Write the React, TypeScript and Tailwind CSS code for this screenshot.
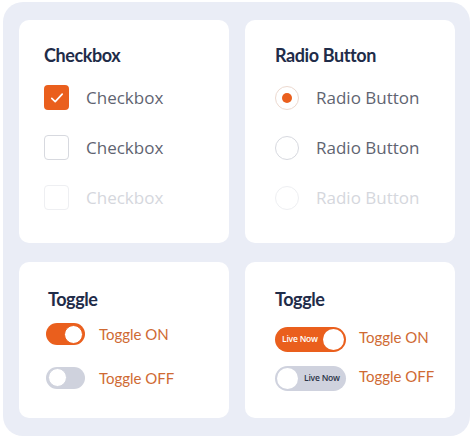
import React from "react";

const title = "text-[18px] leading-[24px] font-bold text-[#1f2c49] tracking-[-0.4px]";
const titleFont = { fontFamily: "Lato, 'Noto Sans', sans-serif" };
const bodyFont = { fontFamily: "'Open Sans', 'Noto Sans', sans-serif" };

function CheckRow({ state, label }: { state: "on" | "off" | "disabled"; label: string }) {
  return (
    <div className="flex h-[25px] items-center">
      {state === "on" ? (
        <span className="flex h-[25px] w-[25px] items-center justify-center rounded-[4px] bg-[#ea5f1d]">
          <svg width="16" height="16" viewBox="0 0 16 16" fill="none">
            <path d="M2.8 8.4l3.4 3.2 7-7.4" stroke="#fff" strokeWidth="1.7" strokeLinecap="round" strokeLinejoin="round" />
          </svg>
        </span>
      ) : (
        <span
          className={
            "h-[25px] w-[25px] rounded-[4px] border-[1.5px] bg-white " +
            (state === "off" ? "border-[#d7d9df]" : "border-[#eeeff2]")
          }
        />
      )}
      <span
        className={
          "ml-[17px] text-[17px] " + (state === "disabled" ? "text-[#d5d7dd]" : "text-[#5f6471]")
        }
        style={bodyFont}
      >
        {label}
      </span>
    </div>
  );
}

function RadioRow({ state, label }: { state: "on" | "off" | "disabled"; label: string }) {
  return (
    <div className="flex h-[25px] items-center">
      <span
        className={
          "flex h-[24px] w-[24px] items-center justify-center rounded-full border-[1.5px] bg-white " +
          (state === "on"
            ? "border-[#ecd9cf]"
            : state === "off"
            ? "border-[#d7d9df]"
            : "border-[#eeeff2]")
        }
      >
        {state === "on" && <span className="h-[10px] w-[10px] rounded-full bg-[#ea5f1d]" />}
      </span>
      <span
        className={
          "ml-[17px] text-[17px] " + (state === "disabled" ? "text-[#d5d7dd]" : "text-[#5f6471]")
        }
        style={bodyFont}
      >
        {label}
      </span>
    </div>
  );
}

function SmallToggle({ on, label }: { on: boolean; label: string }) {
  return (
    <div className="flex items-center">
      <span
        className={
          "flex h-[22px] w-[39px] items-center rounded-full px-[2px] " +
          (on ? "justify-end bg-[#ea5f1d]" : "justify-start bg-[#cfd2dd]")
        }
      >
        <span
          className={
            "h-[19px] w-[19px] rounded-full border-[1.5px] bg-white " +
            (on ? "border-[#ea5f1d]" : "border-[#cfd2dd]")
          }
        />
      </span>
      <span className="ml-[14px] text-[15px] text-[#cf6a33]" style={titleFont}>
        {label}
      </span>
    </div>
  );
}

function LiveToggle({ on, label }: { on: boolean; label: string }) {
  return (
    <div className="flex items-center">
      <span
        className={
          "flex h-[25px] w-[71px] items-center rounded-full px-[2px] " +
          (on ? "bg-[#ea5f1d]" : "bg-[#cfd2de]")
        }
      >
        {on ? (
          <>
            <span
              className="ml-[5px] flex-1 whitespace-nowrap text-[8.5px] font-semibold tracking-[-0.2px] text-white"
              style={bodyFont}
            >
              Live Now
            </span>
            <span className="h-[21px] w-[21px] rounded-full bg-white" />
          </>
        ) : (
          <>
            <span className="h-[21px] w-[21px] rounded-full bg-white" />
            <span
              className="ml-[6px] flex-1 whitespace-nowrap text-[8.5px] font-semibold tracking-[-0.2px] text-[#2b3348]"
              style={bodyFont}
            >
              Live Now
            </span>
          </>
        )}
      </span>
      <span className="ml-[13px] -mt-[4px] text-[15px] text-[#cf6a33]" style={titleFont}>
        {label}
      </span>
    </div>
  );
}

export default function App() {
  return (
    <div className="h-[440px] w-[474px] bg-white pl-[3px] pt-[2px]">
      <div className="grid h-[434px] w-[467px] grid-cols-[210px_210px] grid-rows-[223px_156px] gap-x-[16px] gap-y-[19px] rounded-[20px] bg-[#eaedf6] pl-[16px] pt-[18px]">
        <div className="rounded-[10px] bg-white px-[25px] pt-[23px]">
          <div className={title} style={titleFont}>Checkbox</div>
          <div className="mt-[18px] flex flex-col gap-[25px]">
            <CheckRow state="on" label="Checkbox" />
            <CheckRow state="off" label="Checkbox" />
            <CheckRow state="disabled" label="Checkbox" />
          </div>
        </div>
        <div className="rounded-[10px] bg-white px-[30px] pt-[23px]">
          <div className={title} style={titleFont}>Radio Button</div>
          <div className="mt-[18px] flex flex-col gap-[25px]">
            <RadioRow state="on" label="Radio Button" />
            <RadioRow state="off" label="Radio Button" />
            <RadioRow state="disabled" label="Radio Button" />
          </div>
        </div>
        <div className="rounded-[10px] bg-white pl-[27px] pt-[25px]">
          <div className={title + " pl-[2px]"} style={titleFont}>Toggle</div>
          <div className="mt-[12px] flex flex-col gap-[21px]">
            <SmallToggle on label="Toggle ON" />
            <SmallToggle on={false} label="Toggle OFF" />
          </div>
        </div>
        <div className="rounded-[10px] bg-white pl-[30px] pt-[25px]">
          <div className={title} style={titleFont}>Toggle</div>
          <div className="mt-[16px] flex flex-col gap-[14px]">
            <LiveToggle on label="Toggle ON" />
            <LiveToggle on={false} label="Toggle OFF" />
          </div>
        </div>
      </div>
    </div>
  );
}
